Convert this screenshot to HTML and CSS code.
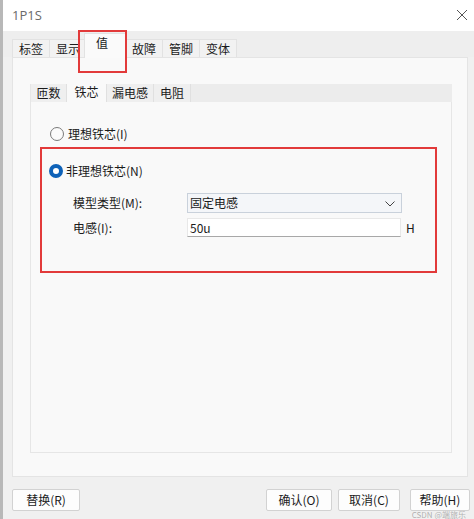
FILE: index.html
```html
<!DOCTYPE html>
<html lang="zh">
<head>
<meta charset="utf-8">
<title>1P1S</title>
<link rel="stylesheet" href="styles.css">
</head>
<body>
<div class="window">
  <div class="titlebar">
    <span class="title">1P1S</span>
    <svg class="close" width="12" height="12" viewBox="0 0 12 12"><path d="M1 1 L11 11 M11 1 L1 11" stroke="#555" stroke-width="1" fill="none"/></svg>
  </div>
  <div class="tabbar">
    <div class="tab">标签</div>
    <div class="tab">显示</div>
    <div class="tab active">值</div>
    <div class="tab">故障</div>
    <div class="tab">管脚</div>
    <div class="tab">变体</div>
    <div class="mark-tab"></div>
  </div>
  <div class="pane">
    <div class="subtabbar">
      <div class="subtab">匝数</div>
      <div class="subtab active">铁芯</div>
      <div class="subtab">漏电感</div>
      <div class="subtab">电阻</div>
    </div>
    <div class="subpane">
      <div class="radio-row first">
        <span class="radio"></span>
        <span class="radio-label">理想铁芯(I)</span>
      </div>
      <div class="redbox">
        <div class="radio-row">
          <span class="radio checked"></span>
          <span class="radio-label">非理想铁芯(N)</span>
        </div>
        <div class="field-row">
          <span class="field-label">模型类型(M):</span>
          <div class="select">
            <span>固定电感</span>
            <svg class="chev" width="10" height="6" viewBox="0 0 10 6"><path d="M0.5 0.5 L5 5 L9.5 0.5" stroke="#444" stroke-width="1" fill="none"/></svg>
          </div>
        </div>
        <div class="field-row second">
          <span class="field-label">电感(I):</span>
          <div class="input">50u</div>
          <span class="unit">H</span>
        </div>
      </div>
    </div>
  </div>
  <div class="footer">
    <div class="btn btn-replace">替换(R)</div>
    <div class="spacer"></div>
    <div class="btn btn-ok">确认(O)</div>
    <div class="btn btn-cancel">取消(C)</div>
    <div class="btn btn-help">帮助(H)</div>
    <span class="watermark">CSDN @端旅乐</span>
  </div>
</div>
</body>
</html>
```

FILE: styles.css
```css
html, body {
  margin: 0;
  padding: 0;
}
body {
  background: #b8b8b8;
  width: 474px;
  height: 519px;
  overflow: hidden;
  font-family: "Noto Sans CJK SC", "Noto Sans", sans-serif;
  font-size: 12px;
  color: #1b1b1b;
}
.window {
  margin-left: 3px;
  width: 471px;
  height: 519px;
  background: #f0f0f0;
  display: flex;
  flex-direction: column;
  position: relative;
}
.titlebar {
  height: 31px;
  flex: none;
  background: #ffffff;
  display: flex;
  align-items: center;
  padding-left: 9px;
  padding-right: 6px;
  justify-content: space-between;
}
.title {
  font-family: "Open Sans", "Noto Sans", sans-serif;
  font-size: 13px;
  color: #6a6a6a;
  margin-top: -2px;
}
.close {
  margin-top: -2px;
}
.tabbar {
  height: 26px;
  flex: none;
  background: #eeeeee;
  display: flex;
  align-items: flex-end;
  padding-left: 9px;
  position: relative;
}
.tab {
  height: 18px;
  width: 38px;
  box-sizing: border-box;
  background: #f2f2f2;
  border: 1px solid #e2e2e2;
  border-bottom: none;
  margin-right: -1px;
  display: flex;
  align-items: center;
  justify-content: center;
  line-height: 1;
  padding-top: 1px;
}
.tab.active {
  height: 25px;
  width: 42px;
  margin-left: -2px;
  margin-right: -1px;
  margin-bottom: -1px;
  background: #fafafa;
  padding-top: 0;
  padding-bottom: 7px;
  padding-right: 6px;
  position: relative;
  z-index: 2;
}
.mark-tab {
  position: absolute;
  left: 75px;
  top: -1px;
  width: 45px;
  height: 39px;
  border: 2px solid #e23a3a;
  z-index: 5;
}
.pane {
  margin-left: 9px;
  width: 456px;
  height: 420px;
  flex: none;
  box-sizing: border-box;
  background: #f9f9f9;
  border: 1px solid #e4e4e4;
  padding-top: 26px;
  padding-left: 17px;
}
.subtabbar {
  width: 422px;
  height: 18px;
  background: #ececec;
  display: flex;
  align-items: stretch;
}
.subtab {
  box-sizing: border-box;
  padding: 0 5px;
  min-width: 37px;
  background: #efefef;
  border-right: 1px solid #e0e0e0;
  display: flex;
  align-items: center;
  justify-content: center;
  line-height: 1;
}
.subtab:first-child {
  border-left: 1px solid #e6e6e6;
}
.subtab.active {
  background: #f9f9f9;
  padding-bottom: 2px;
  min-width: 40px;
}
.subpane {
  width: 422px;
  height: 351px;
  box-sizing: border-box;
  background: #f9f9f9;
  border: 1px solid #e6e6e6;
  border-top: none;
  padding-top: 23px;
  padding-left: 9px;
}
.radio-row {
  height: 18px;
  display: flex;
  align-items: center;
}
.radio-row.first {
  padding-left: 10px;
}
.radio {
  width: 14px;
  height: 14px;
  box-sizing: border-box;
  border-radius: 50%;
  border: 1px solid #7a7a7a;
  background: #fbfbfb;
  flex: none;
}
.radio.checked {
  border: 4px solid #0f62b8;
  background: #ffffff;
}
.radio-label {
  margin-left: 4px;
  line-height: 1;
}
.redbox {
  margin-top: 4px;
  width: 397px;
  height: 126px;
  box-sizing: border-box;
  border: 2px solid #e23a3a;
  padding-top: 13px;
  padding-left: 7px;
}
.redbox .radio-label {
  margin-left: 3px;
}
.field-row {
  display: flex;
  align-items: center;
  margin-top: 13px;
  padding-left: 24px;
  height: 20px;
}
.field-row.second {
  margin-top: 5px;
  height: 19px;
}
.field-label {
  width: 114px;
  flex: none;
  line-height: 1;
}
.select {
  width: 215px;
  height: 20px;
  box-sizing: border-box;
  background: #f4f6f9;
  border: 1px solid #c9d1db;
  display: flex;
  align-items: center;
  justify-content: space-between;
  padding-left: 2px;
  padding-right: 6px;
  line-height: 1;
}
.chev {
  margin-top: 1px;
}
.input {
  width: 214px;
  height: 19px;
  box-sizing: border-box;
  background: #ffffff;
  border: 1px solid #e8e8e8;
  border-bottom: 1px solid #a8a8a8;
  display: flex;
  align-items: center;
  padding-left: 2px;
  line-height: 1;
}
.unit {
  margin-left: 5px;
  line-height: 1;
}
.footer {
  flex: 1;
  display: flex;
  align-items: flex-start;
  padding-top: 12px;
  padding-left: 9px;
  padding-right: 4px;
  position: relative;
}
.spacer {
  flex: 1;
}
.btn {
  height: 22px;
  box-sizing: border-box;
  background: #fdfdfd;
  border: 1px solid #d2d2d2;
  border-radius: 2px;
  display: flex;
  align-items: center;
  justify-content: center;
  line-height: 1;
}
.btn-replace { width: 68px; }
.btn-ok { width: 66px; margin-right: 6px; }
.btn-cancel { width: 62px; margin-right: 10px; }
.btn-help { width: 60px; }
.watermark {
  position: absolute;
  right: 8px;
  bottom: 0px;
  font-size: 8px;
  line-height: 8px;
  color: rgba(120, 120, 120, 0.55);
}
```
